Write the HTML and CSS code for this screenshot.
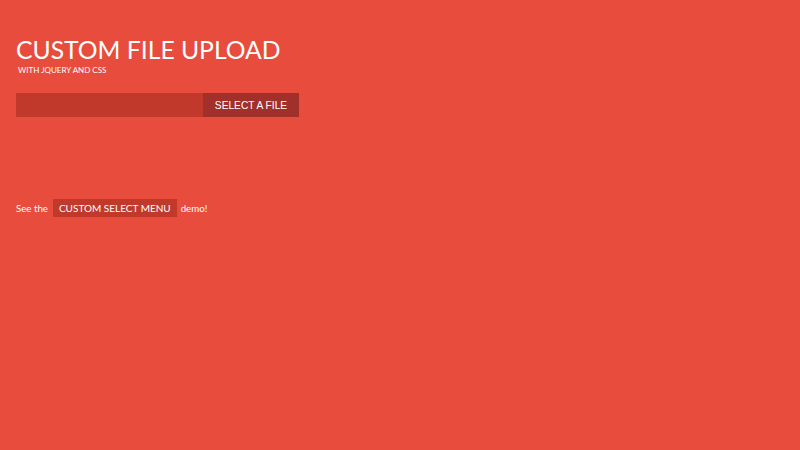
FILE: index.html
```html
<!DOCTYPE html>
<html>
<head>
<meta charset="utf-8">
<link rel="stylesheet" href="styles.css">
</head>
<body>
<div class="page">
  <h1 class="title">CUSTOM FILE UPLOAD</h1>
  <div class="subtitle">WITH JQUERY AND CSS</div>
  <div class="upload">
    <div class="field"></div>
    <div class="btn">SELECT A FILE</div>
  </div>
  <p class="note">See the <span class="tag">CUSTOM SELECT MENU</span> demo!</p>
</div>
</body>
</html>
```
FILE: styles.css
```css
html, body { margin: 0; padding: 0; }
body { background: #e74c3c; color: #fff; font-family: Lato, "Open Sans", sans-serif; width: 800px; height: 450px; overflow: hidden; }
.page { padding: 36px 16px 0 16px; }
.title { margin: 0; font-weight: 400; font-size: 24.7px; line-height: 28px; letter-spacing: 0; }
.subtitle { font-size: 8px; line-height: 10px; margin: 1px 0 0 2px; }
.upload { display: flex; margin-top: 18px; width: 283px; height: 24px; }
.field { flex: 1; background: #c0392b; }
.btn { width: 96px; background: #a2302a; font-family: "Liberation Sans", Arial, sans-serif; font-size: 10.2px; display: flex; align-items: center; justify-content: center; }
.note { margin: 82px 0 0 0; font-size: 9.7px; display: flex; align-items: center; }
.tag { background: #c0392b; padding: 0 6px; height: 18px; line-height: 18px; margin: 0 4px 0 5px; font-size: 10px; }
```
